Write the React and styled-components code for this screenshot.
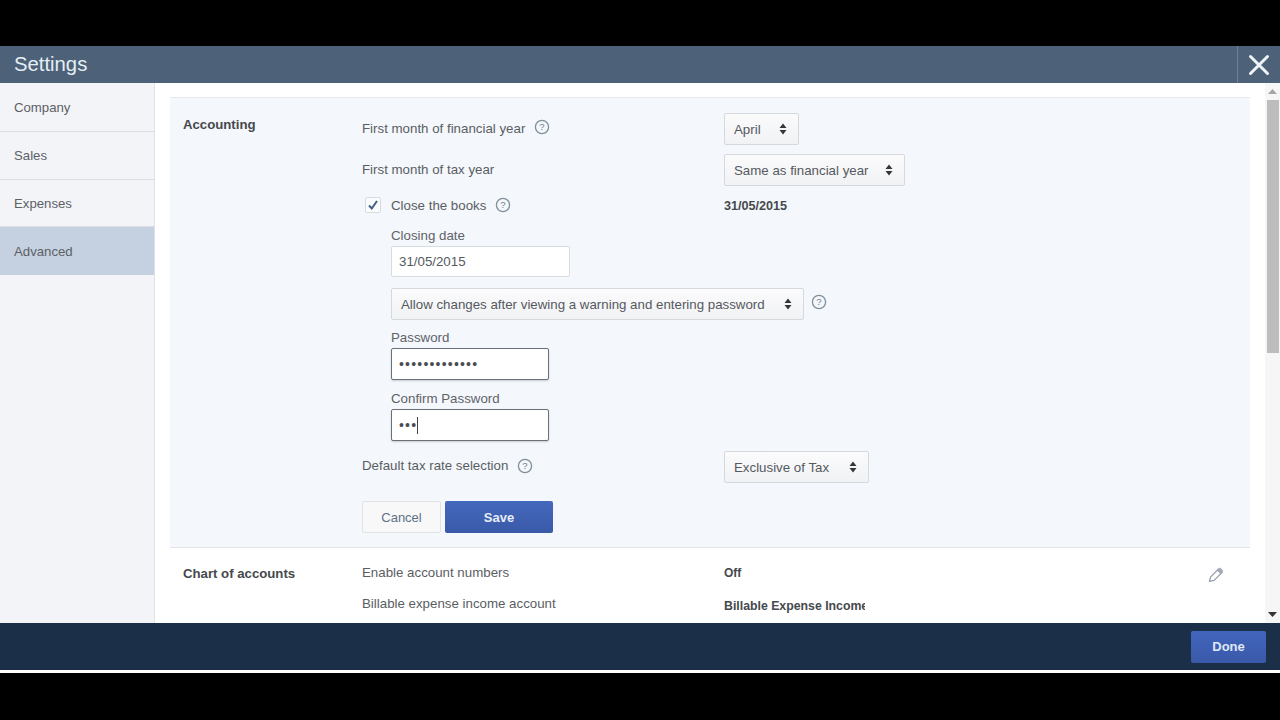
import React from 'react';
import styled, { createGlobalStyle } from 'styled-components';

const GlobalStyle = createGlobalStyle`
    html, body {
        margin: 0;
        height: 100%;
        background: #000;
        font-family: "Liberation Sans", Arial, sans-serif;
    }
`;

const Page = styled.div`
    width: 1280px;
    height: 720px;
    padding-top: 46px;
    box-sizing: border-box;
    background: #000;
    overflow: hidden;
`;

const Header = styled.div`
    height: 37px;
    display: flex;
    align-items: center;
    justify-content: space-between;
    background: #4d6178;
`;

const Title = styled.div`
    padding-left: 14px;
    font-size: 20.3px;
    color: #e3eff5;
`;

const CloseBox = styled.div`
    width: 43px;
    height: 37px;
    display: flex;
    align-items: center;
    justify-content: center;
    box-sizing: border-box;
    border-left: 1px solid #6f8095;
`;

const Body = styled.div`
    height: 540px;
    display: flex;
    background: #fff;
    overflow: hidden;
`;

const Sidebar = styled.div`
    width: 155px;
    flex: none;
    box-sizing: border-box;
    background: #f2f4f7;
    border-right: 1px solid #dfe2e6;
`;

const NavItem = styled.div`
    height: 48px;
    box-sizing: border-box;
    display: flex;
    align-items: center;
    padding-left: 14px;
    font-size: 13.2px;
    color: #5d6166;
    background: ${p => (p.$active ? '#c5d1e0' : 'transparent')};
    border-bottom: ${p => (p.$active ? 'none' : '1px solid #dcdee2')};

    &:first-child {
        height: 49px;
    }

    &:nth-child(3) {
        height: 47px;
    }
`;

const Content = styled.div`
    flex: 1;
    padding: 14px 15px 0 15px;
    min-width: 0;
`;

const Section = styled.div`
    display: flex;
    padding: ${p => (p.$open ? '15px 0 14px 13px' : '16px 0 0 13px')};
    background: ${p => (p.$open ? '#f4f7fc' : '#fff')};
    border-top: ${p => (p.$open ? '1px solid #e8e9ec' : 'none')};
    border-bottom: ${p => (p.$open ? '1px solid #e4e5e8' : 'none')};
`;

const SectionLabel = styled.div`
    width: 179px;
    flex: none;
    font-size: 13.2px;
    font-weight: bold;
    color: #45494d;
    line-height: 20px;
    margin-top: ${p => p.$top || 0}px;
`;

const Fields = styled.div`
    flex: 1;
    display: flex;
    flex-direction: column;
    margin-top: ${p => p.$top || 0}px;
`;

const Row = styled.div`
    display: grid;
    grid-template-columns: 362px 1fr;
    align-items: center;
    margin-top: ${p => p.$mt || 0}px;
`;

const RowText = styled.div`
    display: flex;
    align-items: center;
    gap: 9px;
    font-size: 13.3px;
    color: #5a5e63;
    margin-top: ${p => p.$shift || 0}px;
`;

const Help = styled.svg`
    width: 16px;
    height: 16px;
    flex: none;
    margin-left: ${p => p.$ml || 0}px;
    margin-top: ${p => p.$mt || 0}px;
`;

const SelectBox = styled.div`
    display: inline-flex;
    align-items: center;
    justify-content: space-between;
    box-sizing: border-box;
    height: 32px;
    width: ${p => p.$w}px;
    padding: 0 11px 0 9px;
    font-size: 13.3px;
    color: #55595e;
    background: linear-gradient(#fbfbfc, #f1f2f4);
    border: 1px solid #d5d8dc;
    border-radius: 2px;
`;

const Value = styled.div`
    font-size: ${p => p.$size || 12.6}px;
    font-weight: bold;
    color: #45494d;
    white-space: nowrap;
    overflow: hidden;
    width: ${p => (p.$w ? `${p.$w}px` : 'auto')};
    margin-top: ${p => p.$mt || 0}px;
`;

const CheckWrap = styled.div`
    width: 16px;
    height: 16px;
    margin: 0 10px 0 3px;
    flex: none;
    box-sizing: border-box;
    display: flex;
    align-items: center;
    justify-content: center;
    background: #fbfcfd;
    border: 1px solid #d8dbdf;
    border-radius: 2px;
`;

const CheckRow = styled.div`
    display: flex;
    align-items: center;
    font-size: 13.3px;
    color: #5a5e63;
`;

const Nested = styled.div`
    padding-left: 29px;
    display: flex;
    flex-direction: column;
    align-items: flex-start;
`;

const FieldLabel = styled.div`
    font-size: 13.3px;
    line-height: 15px;
    color: #5f6368;
    margin-top: ${p => p.$mt || 0}px;
`;

const TextBox = styled.div`
    box-sizing: border-box;
    width: ${p => p.$w}px;
    height: ${p => p.$h || 32}px;
    margin-top: 3px;
    padding-left: 7px;
    display: flex;
    align-items: center;
    font-size: 13.3px;
    color: #55595e;
    background: #fff;
    border: 1px solid ${p => (p.$focus ? '#6a7078' : '#d8dbdf')};
    border-radius: 2px;
    box-shadow: ${p => (p.$focus ? '0 1px 2px rgba(0,0,0,.18)' : 'none')};
`;

const Dots = styled.span`
    font-size: 14px;
    letter-spacing: 1.2px;
    color: #4a4e52;
`;

const Cursor = styled.span`
    display: inline-block;
    width: 1px;
    height: 17px;
    background: #444;
`;

const WideRow = styled.div`
    display: flex;
    align-items: center;
    gap: 7px;
    margin-top: 11px;
`;

const Buttons = styled.div`
    display: flex;
    gap: 4px;
    margin-top: 18px;
`;

const CancelBtn = styled.div`
    width: 79px;
    height: 32px;
    box-sizing: border-box;
    display: flex;
    align-items: center;
    justify-content: center;
    font-size: 13px;
    color: #5f7187;
    background: #f8f8f8;
    border: 1px solid #e2e3e5;
    border-radius: 2px;
`;

const SaveBtn = styled.div`
    width: 108px;
    height: 32px;
    display: flex;
    align-items: center;
    justify-content: center;
    font-size: 13px;
    font-weight: bold;
    color: #e8eef8;
    background: linear-gradient(#4468bd, #3a5aa8);
    border-radius: 2px;
`;

const PlainRow = styled.div`
    display: grid;
    grid-template-columns: 362px 1fr 43px;
    align-items: center;
    height: 20px;
    margin-bottom: 12px;
    font-size: 13.3px;
    color: #5a5e63;
`;

const Pencil = styled.svg`
    width: 18px;
    height: 18px;
    margin-top: 5px;
`;

const Scrollbar = styled.div`
    width: 15px;
    flex: none;
    display: flex;
    flex-direction: column;
    align-items: center;
    background: #f6f6f6;
`;

const ArrowBtn = styled.div`
    height: 17px;
    flex: none;
    display: flex;
    align-items: center;
    justify-content: center;
`;

const Thumb = styled.div`
    width: 12px;
    height: 253px;
    flex: none;
    background: #bdbdbd;
`;

const Spacer = styled.div`
    flex: 1;
`;

const Footer = styled.div`
    height: 47px;
    display: flex;
    align-items: center;
    justify-content: flex-end;
    padding-right: 14px;
    background: #1b3048;
`;

const DoneBtn = styled.div`
    width: 75px;
    height: 32px;
    display: flex;
    align-items: center;
    justify-content: center;
    font-size: 13px;
    font-weight: bold;
    color: #dfe8f6;
    background: linear-gradient(#4266bd, #3a59a9);
    border-radius: 2px;
`;

const WhiteLine = styled.div`
    height: 3px;
    background: #fff;
`;

const HelpIcon = ({ ml, mt }) => (
    <Help $ml={ml} $mt={mt} viewBox="0 0 16 16">
        <circle cx="8" cy="8" r="6.6" fill="none" stroke="#7f9199" strokeWidth="1.3" />
        <text x="8" y="11.2" textAnchor="middle" fontSize="9.5" fill="#6d7f88" fontFamily="Liberation Sans, sans-serif">?</text>
    </Help>
);

const Updown = () => (
    <svg width="8" height="12" viewBox="0 0 8 12">
        <path d="M4 0.5 L7.5 5 H0.5 Z M0.5 7 H7.5 L4 11.5 Z" fill="#33373b" />
    </svg>
);

const App = () => (
    <Page>
        <GlobalStyle />
        <Header>
            <Title>Settings</Title>
            <CloseBox>
                <svg width="22" height="22" viewBox="0 0 22 22">
                    <path d="M2.5 2.5 L19.5 19.5 M19.5 2.5 L2.5 19.5" stroke="#eef5f8" strokeWidth="3" strokeLinecap="round" />
                </svg>
            </CloseBox>
        </Header>
        <Body>
            <Sidebar>
                <NavItem>Company</NavItem>
                <NavItem>Sales</NavItem>
                <NavItem>Expenses</NavItem>
                <NavItem $active>Advanced</NavItem>
            </Sidebar>
            <Content>
                <Section $open>
                    <SectionLabel $top={2}>Accounting</SectionLabel>
                    <Fields>
                        <Row>
                            <RowText $shift={-1}>First month of financial year <HelpIcon mt={-3} /></RowText>
                            <div><SelectBox $w={75}>April <Updown /></SelectBox></div>
                        </Row>
                        <Row $mt={9}>
                            <RowText $shift={-1}>First month of tax year</RowText>
                            <div><SelectBox $w={181}>Same as financial year <Updown /></SelectBox></div>
                        </Row>
                        <Row $mt={11}>
                            <CheckRow>
                                <CheckWrap>
                                    <svg width="12" height="12" viewBox="0 0 12 12">
                                        <path d="M2 6.5 L4.8 9.5 L10 2" fill="none" stroke="#3f5f88" strokeWidth="2" />
                                    </svg>
                                </CheckWrap>
                                Close the books
                                <HelpIcon ml={9} />
                            </CheckRow>
                            <Value $mt={2}>31/05/2015</Value>
                        </Row>
                        <Nested>
                            <FieldLabel $mt={15}>Closing date</FieldLabel>
                            <TextBox $w={179} $h={31}>31/05/2015</TextBox>
                            <WideRow>
                                <SelectBox $w={413}>Allow changes after viewing a warning and entering password <Updown /></SelectBox>
                                <HelpIcon mt={-5} />
                            </WideRow>
                            <FieldLabel $mt={10}>Password</FieldLabel>
                            <TextBox $w={158} $focus>
                                <Dots>•••••••••••••</Dots>
                            </TextBox>
                            <FieldLabel $mt={11}>Confirm Password</FieldLabel>
                            <TextBox $w={158} $focus>
                                <Dots>•••</Dots><Cursor />
                            </TextBox>
                        </Nested>
                        <Row $mt={10}>
                            <RowText $shift={-3}>Default tax rate selection <HelpIcon /></RowText>
                            <div><SelectBox $w={145}>Exclusive of Tax <Updown /></SelectBox></div>
                        </Row>
                        <Buttons>
                            <CancelBtn>Cancel</CancelBtn>
                            <SaveBtn>Save</SaveBtn>
                        </Buttons>
                    </Fields>
                </Section>
                <Section>
                    <SectionLabel>Chart of accounts</SectionLabel>
                    <Fields $top={-3}>
                        <PlainRow>
                            Enable account numbers
                            <Value $size={12}>Off</Value>
                            <Pencil viewBox="0 0 18 18">
                                <path d="M2.5 15.5 L3.5 11 L11.5 3 L15 6.5 L7 14.5 Z M10.5 4 L14 7.5" fill="none" stroke="#9aa2b2" strokeWidth="1.3" />
                                <path d="M12 2.5 L13 1.6 L16.4 5 L15.5 6 Z" fill="#9aa2b2" />
                            </Pencil>
                        </PlainRow>
                        <PlainRow>
                            Billable expense income account
                            <Value $w={141} $size={12.3} $mt={5}>Billable Expense Income</Value>
                        </PlainRow>
                    </Fields>
                </Section>
            </Content>
            <Scrollbar>
                <ArrowBtn>
                    <svg width="9" height="5" viewBox="0 0 9 5"><path d="M4.5 0 L9 5 H0 Z" fill="#a6a6a6" /></svg>
                </ArrowBtn>
                <Thumb />
                <Spacer />
                <ArrowBtn>
                    <svg width="9" height="5" viewBox="0 0 9 5"><path d="M0 0 H9 L4.5 5 Z" fill="#333" /></svg>
                </ArrowBtn>
            </Scrollbar>
        </Body>
        <Footer>
            <DoneBtn>Done</DoneBtn>
        </Footer>
        <WhiteLine />
    </Page>
);

export default App;
